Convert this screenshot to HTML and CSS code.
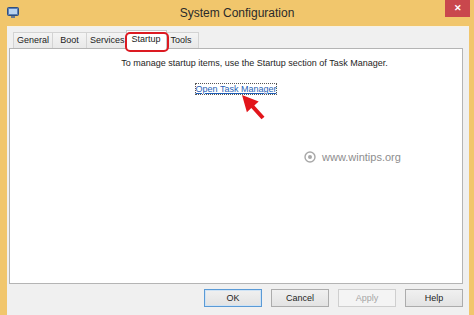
FILE: index.html
```html
<!DOCTYPE html>
<html>
<head>
<meta charset="utf-8">
<link rel="stylesheet" href="styles.css">
</head>
<body>
<div class="window">
  <div class="titlebar">
    <div class="tb-left">
      <svg class="app-icon" width="12" height="11" viewBox="0 0 12 11">
        <rect x="0.5" y="0.5" width="11" height="8" rx="1" fill="#5b7fb5" stroke="#2f4f80"/>
        <rect x="2" y="2" width="8" height="5" fill="#b9d3f0"/>
        <rect x="4" y="9" width="4" height="2" fill="#6b7b90"/>
      </svg>
    </div>
    <div class="title">System Configuration</div>
    <div class="tb-right">
      <div class="close">✕</div>
    </div>
  </div>
  <div class="frame">
    <div class="tabs">
      <div class="tab">General</div>
      <div class="tab">Boot</div>
      <div class="tab">Services</div>
      <div class="tab active">Startup</div>
      <div class="tab">Tools</div>
    </div>
    <div class="panel">
      <p class="msg">To manage startup items, use the Startup section of Task Manager.</p>
      <a class="link" href="#">Open Task Manager</a>
    </div>
    <div class="buttons">
      <div class="btn default">OK</div>
      <div class="btn">Cancel</div>
      <div class="btn disabled">Apply</div>
      <div class="btn">Help</div>
    </div>
  </div>
  <div class="watermark">
    <svg width="12" height="12" viewBox="0 0 12 12">
      <circle cx="6" cy="6" r="5" fill="none" stroke="#a8a8a8" stroke-width="1.4"/>
      <circle cx="6" cy="6" r="2" fill="#a8a8a8"/>
    </svg>
    <span>www.wintips.org</span>
  </div>
  <svg class="arrow" width="474" height="315" viewBox="0 0 474 315">
    <polygon points="242,95 258.7,101.4 254.3,105.5 264.5,116.7 261.5,119.3 251.3,108.1 246.9,112.2" fill="#e2151b"/>
  </svg>
</div>
</body>
</html>
```
FILE: styles.css
```css
* { box-sizing: border-box; }
html, body { margin: 0; padding: 0; }
body {
  width: 474px;
  height: 315px;
  overflow: hidden;
  background: #f1c66c;
  font-family: "Liberation Sans", Arial, sans-serif;
  color: #1e1e1e;
}
.window {
  position: relative;
  width: 474px;
  height: 315px;
  display: flex;
  flex-direction: column;
}
.titlebar {
  height: 26px;
  display: grid;
  grid-template-columns: 1fr auto 1fr;
  align-items: start;
}
.tb-left { padding: 7px 0 0 7px; }
.app-icon { display: block; }
.title {
  font-size: 12px;
  line-height: 26px;
  color: #2a2a2a;
}
.tb-right { display: flex; justify-content: flex-end; padding-right: 4px; }
.close {
  width: 25px;
  height: 17px;
  background: #c9474d;
  color: #fff;
  font-size: 9px;
  font-weight: bold;
  line-height: 17px;
  text-align: center;
}
.frame {
  flex: 1;
  margin: 0 5px 0 7px;
  background: #f0f0f0;
  border-top: 1px solid #f7f1e2;
  padding: 5px 6px 0 2px;
  display: flex;
  flex-direction: column;
}
.tabs {
  display: flex;
  align-items: flex-end;
  height: 16px;
  padding-left: 5px;
  position: relative;
  z-index: 1;
}
.tab {
  height: 16px;
  min-width: 35px;
  padding: 0 3px;
  margin-left: -1px;
  border: 1px solid #d3d3d3;
  border-bottom: none;
  background: linear-gradient(#f4f4f4, #e8e8e8);
  font-size: 9px;
  line-height: 15px;
  text-align: center;
  color: #222;
}
.tab.active {
  position: relative;
  height: 19px;
  margin: 0 -2px -1px -3px;
  padding: 0 5px;
  background: #fff;
  border-color: #c8c8c8;
  line-height: 16px;
  z-index: 2;
}
.tab.active::after {
  content: "";
  position: absolute;
  left: -2px;
  right: -3px;
  top: 1px;
  bottom: -3px;
  border: 2.5px solid #dc1a22;
  border-radius: 5px;
}
.panel {
  height: 236px;
  background: #fff;
  border: 1px solid #b4b4b4;
  display: flex;
  flex-direction: column;
  align-items: center;
}
.msg {
  margin: 9px 0 0 0;
  padding-left: 37px;
  font-size: 9px;
  line-height: 11px;
}
.link {
  margin-top: 15px;
  font-size: 9px;
  line-height: 10px;
  color: #1f5fb8;
  text-decoration: underline;
  outline: 1px dotted #555;
}
.buttons {
  display: flex;
  justify-content: flex-end;
  gap: 9px;
  padding-top: 5px;
}
.btn {
  width: 58px;
  height: 18px;
  border: 1px solid #acacac;
  background: linear-gradient(#f0f0f0, #e3e3e3);
  font-size: 9px;
  line-height: 16px;
  text-align: center;
  color: #1e1e1e;
}
.btn.default { border-color: #5a9ad6; box-shadow: inset 0 0 0 1px #cfe3f5; }
.btn.disabled { color: #a6a6a6; border-color: #cfcfcf; background: #f4f4f4; }
.watermark {
  position: absolute;
  left: 304px;
  top: 151px;
  display: flex;
  align-items: center;
  gap: 6px;
  color: #8e8e8e;
  font-size: 11px;
}
.watermark svg { display: block; }
.arrow {
  position: absolute;
  left: 0;
  top: 0;
  pointer-events: none;
}
```
